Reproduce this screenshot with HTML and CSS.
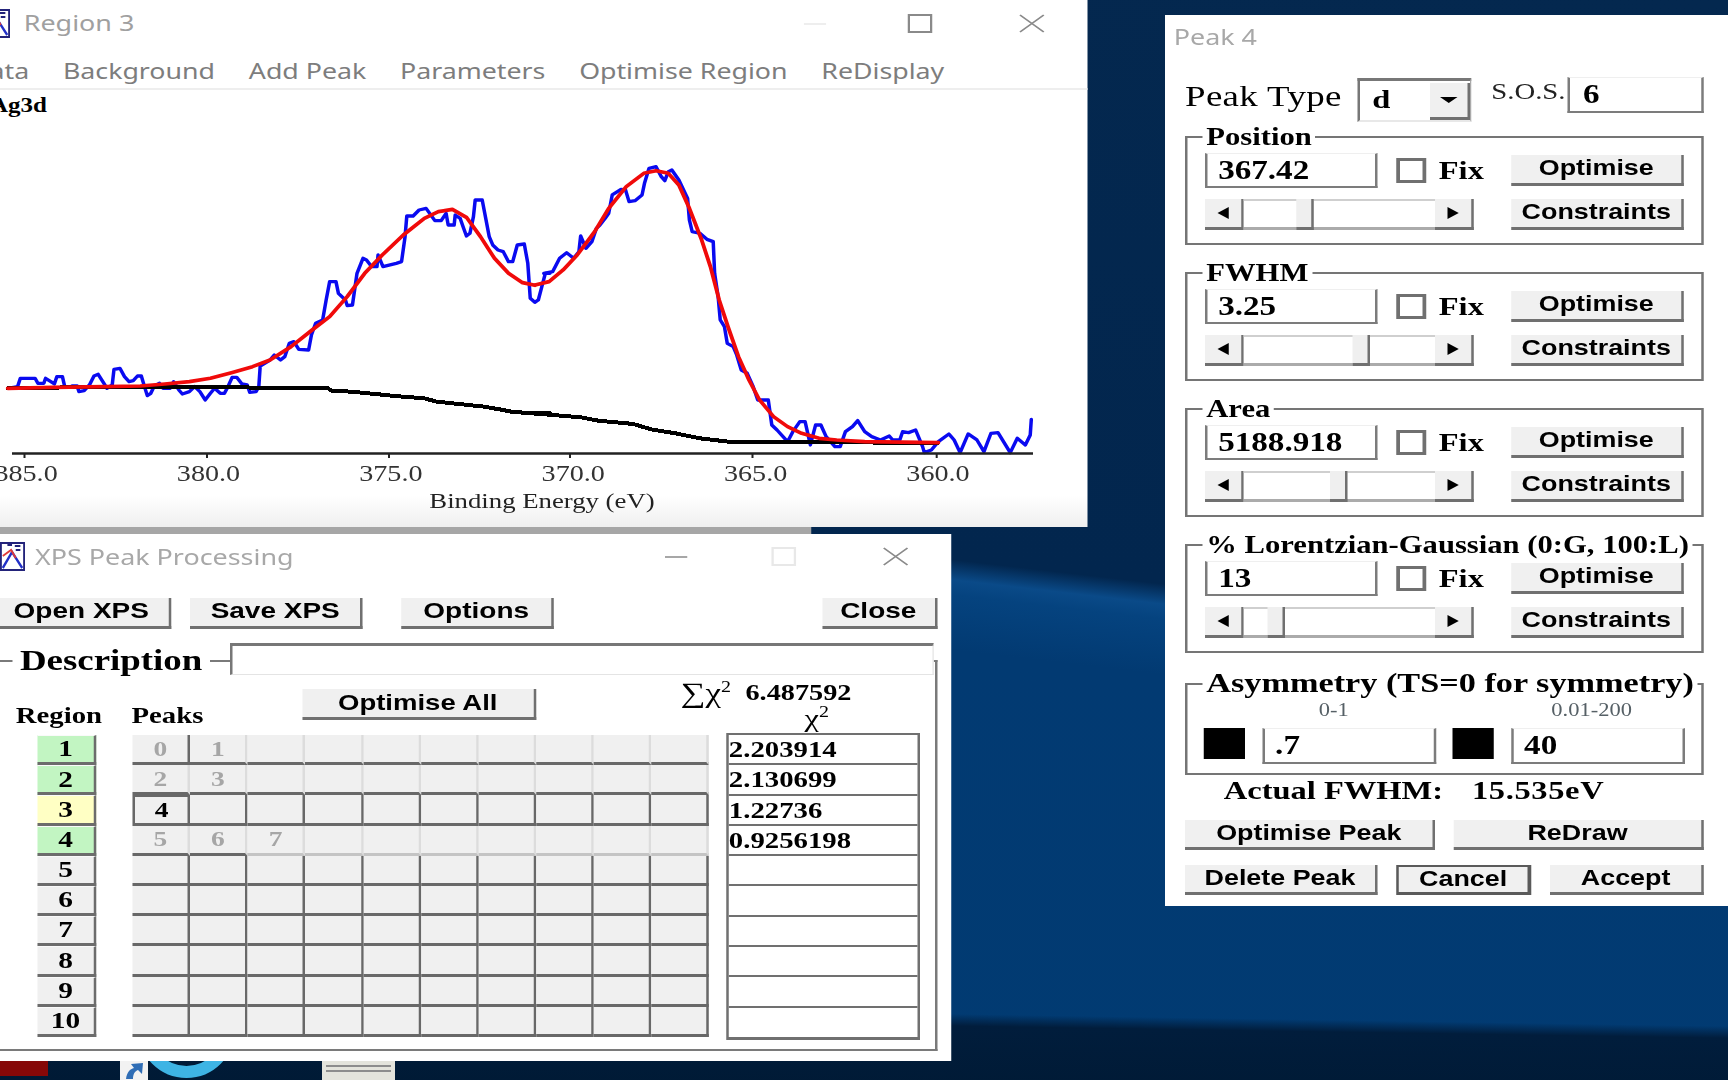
FILE: index.html
```html
<!DOCTYPE html>
<html lang="en">
<head>
<meta charset="utf-8">
<title>XPS Peak Processing</title>
<link rel="stylesheet" href="styles.css">
</head>
<body>
<main class="desktop">
  <div class="dk-red"></div>
  <div class="dk-tile">
    <svg class="dk-arrow" viewBox="0 0 28 18"><path d="M6 18 C7 11 10 8 14 7 L11 3 L23 2 L22 13 L18 9 C15 10 13 13 13 18 Z" fill="#2f6db5"/></svg>
  </div>
  <div class="dk-ring"></div>
  <div class="dk-note"><i></i><i></i></div>

  <section class="win region">
    <div class="region-body">
      <header class="title-bar region-title">
        <svg class="app-icon" viewBox="0 0 27 29" preserveAspectRatio="none"><rect x="1" y="1" width="25" height="27" fill="#fff" stroke="#23237a" stroke-width="2"/><path d="M3 26 L13 10 L24 26" fill="none" stroke="#2230c8" stroke-width="2.5"/><path d="M3 14 L12 8 L17 16" fill="none" stroke="#e03a3a" stroke-width="2"/><path d="M8 3 h5 M16 4 h6 M17 8 h5" stroke="#23237a" stroke-width="2"/></svg>
        <span class="title">Region 3</span>
        <div class="controls region-controls">
          <svg class="ctl ctl-min" viewBox="0 0 18 19"><path d="M0 10 H18" stroke="#eee" stroke-width="2"/></svg>
          <svg class="ctl ctl-max" viewBox="0 0 20 19"><rect x="1" y="1" width="18" height="17" fill="none" stroke="#8a8a8a" stroke-width="2"/></svg>
          <svg class="ctl ctl-close" viewBox="0 0 21 19"><path d="M1 1 L20 18 M20 1 L1 18" stroke="#8a8a8a" stroke-width="1.6"/></svg>
        </div>
      </header>
      <nav class="menu">
        <span>Data</span><span>Background</span><span>Add Peak</span><span>Parameters</span><span>Optimise Region</span><span>ReDisplay</span>
      </nav>
      <div class="chart-name">Ag3d</div>
      <svg class="plot" viewBox="-30 120 1117 340" preserveAspectRatio="none">
        <g fill="none" stroke-linejoin="round" stroke-linecap="round" stroke-width="10">
          <g transform="translate(0 130) scale(.3507 .3333)" stroke="#0a0af0">
            <polyline points="22,775 50,770 58,745 85,745 100,745 108,760 125,760 130,745 145,755 155,762 162,740 178,740 185,772 200,772 205,768 220,768 225,785 240,782 255,765 268,738 280,733 295,758 305,775 320,765 325,718 342,715 355,740 368,755 380,752 392,738 403,738 412,770 420,797 430,790 440,768 455,760 465,775 485,775 495,755 510,780 520,792 540,785 555,770 570,785 585,810 600,790 612,775 628,790 640,790 650,770 662,742 675,742 690,762 705,765 712,787 730,785 738,770 742,708 770,690 782,675 800,690 812,680 825,640 838,635 852,658 880,660 888,615 900,580 920,570 930,510 940,455 958,455 965,490 985,510 990,527 1005,525 1018,430 1035,385 1045,390 1060,410 1075,410 1078,375 1092,410 1130,400 1145,395 1155,320 1160,258 1178,258 1195,240 1215,235 1240,272 1258,272 1272,250 1278,285 1295,285 1298,255 1312,265 1322,295 1330,318 1340,310 1350,260 1355,210 1375,210 1395,320 1405,345 1420,360 1435,365 1450,395 1462,395 1475,345 1495,342 1505,400 1512,505 1525,517 1535,510 1545,470 1555,430 1568,430"/>
          </g>
          <g transform="translate(500 130) scale(.3507 .3333)" stroke="#0a0af0">
            <polyline points="125,430 150,425 170,385 190,368 210,385 225,365 230,318 245,355 262,335 275,295 285,285 300,265 310,250 320,195 345,178 358,180 368,215 385,212 405,195 412,160 425,115 445,110 460,140 470,152 480,125 490,120 510,150 535,205 540,270 548,305 570,310 590,328 608,335 612,430 622,500 628,570 640,590 648,640 665,650 675,675 688,720 705,730 722,770 735,810 765,810 775,885 790,900 820,935 835,905 855,875 870,875 885,945 900,885 915,885 930,920 955,950 970,950 985,905 1005,890 1020,872 1040,905 1060,920 1085,930 1110,918 1120,930 1140,930 1148,905 1165,908 1185,900 1205,950 1210,968 1230,960 1250,935 1280,912 1295,930 1312,968 1335,912 1360,930 1380,965 1400,910 1420,908 1455,968 1475,925 1498,945 1512,915 1515,868"/>
          </g>
          <g class="stepped" transform="translate(0 130) scale(.3507 .3333)" stroke="#000" stroke-width="12">
            <polyline points="22,775 330,770 770,773 935,775 945,782 1000,785 1070,792 1125,798 1210,805 1245,815 1290,820 1380,830 1460,845 1510,850 1568,850"/>
          </g>
          <g class="stepped" transform="translate(500 130) scale(.3507 .3333)" stroke="#000" stroke-width="12">
            <polyline points="0,838 30,845 90,850 150,855 230,862 280,872 380,882 430,898 500,910 570,925 650,935 760,937 1250,938"/>
          </g>
          <g transform="translate(0 130) scale(.3507 .3333)" stroke="#f00a0a" stroke-width="11">
            <polyline points="22,775 150,772 300,770 400,768 470,762 540,755 600,745 660,728 720,710 770,690 830,650 890,600 940,560 990,500 1040,430 1090,375 1150,315 1210,265 1250,245 1290,238 1330,262 1370,320 1410,385 1450,430 1490,458 1525,466"/>
          </g>
          <g transform="translate(500 130) scale(.3507 .3333)" stroke="#f00a0a" stroke-width="11">
            <polyline points="100,465 140,455 180,420 220,375 270,305 310,235 360,170 410,130 445,122 480,130 510,165 540,235 575,330 600,410 625,510 650,590 680,680 710,750 740,810 780,860 820,890 860,910 910,925 960,930 1040,935 1250,938"/>
          </g>
        </g>
        <path d="M12 453.5 H1033" stroke="#222" stroke-width="2.5"/>
        <path d="M24.5 453 V458 M207 453 V458 M389 453 V458 M570 453 V458 M752.5 453 V458 M936.7 453 V458" stroke="#222" stroke-width="2"/>
      </svg>
      <div class="ticks"><span>385.0</span><span>380.0</span><span>375.0</span><span>370.0</span><span>365.0</span><span>360.0</span></div>
      <div class="axis-name">Binding Energy (eV)</div>
    </div>
    <div class="region-strip"></div>
  </section>

  <section class="win xps">
    <header class="title-bar xps-title">
      <svg class="app-icon" viewBox="0 0 27 29" preserveAspectRatio="none"><rect x="1" y="1" width="25" height="27" fill="#fff" stroke="#23237a" stroke-width="2"/><path d="M3 26 L13 10 L24 26" fill="none" stroke="#2230c8" stroke-width="2.5"/><path d="M3 14 L12 8 L17 16" fill="none" stroke="#e03a3a" stroke-width="2"/><path d="M8 3 h5 M16 4 h6 M17 8 h5" stroke="#23237a" stroke-width="2"/></svg>
      <span class="title">XPS Peak Processing</span>
      <div class="controls xps-controls">
        <svg class="ctl ctl-min" viewBox="0 0 18 19"><path d="M0 10 H18" stroke="#8a8a8a" stroke-width="1.6"/></svg>
        <svg class="ctl ctl-max" viewBox="0 0 20 19"><rect x="1" y="1" width="18" height="17" fill="none" stroke="#e8e8e8" stroke-width="2"/></svg>
        <svg class="ctl ctl-close" viewBox="0 0 21 19"><path d="M1 1 L20 18 M20 1 L1 18" stroke="#8a8a8a" stroke-width="1.6"/></svg>
      </div>
    </header>
    <div class="file-row">
      <button class="btn w-open">Open XPS</button>
      <button class="btn w-save">Save XPS</button>
      <button class="btn w-opts">Options</button>
      <button class="btn w-close">Close</button>
    </div>
    <div class="desc-box">
      <span class="desc-legend">Description</span>
      <div class="desc-input"></div>
      <div class="table">
        <div class="head-region">Region</div>
        <div class="head-peaks"><span>Peaks</span><button class="btn w-all">Optimise All</button></div>
        <div class="head-chi">
          <div class="sum-line"><span class="sum-sym">∑χ<sup>2</sup></span><span class="sum-val">6.487592</span></div>
          <div class="chi-line">χ<sup>2</sup></div>
        </div>
        <div class="regions">
          <button class="rg rg-on">1</button><button class="rg rg-on">2</button><button class="rg rg-cur">3</button><button class="rg rg-on">4</button><button class="rg">5</button><button class="rg">6</button><button class="rg">7</button><button class="rg">8</button><button class="rg">9</button><button class="rg">10</button>
        </div>
        <div class="peaks">
          <button class="c g">0</button><button class="c s g">1</button><button class="c s"></button><button class="c s"></button><button class="c s"></button><button class="c s"></button><button class="c s"></button><button class="c s"></button><button class="c s"></button><button class="c s"></button>
          <button class="c s g">2</button><button class="c s g">3</button><button class="c s"></button><button class="c s"></button><button class="c s"></button><button class="c s"></button><button class="c s"></button><button class="c s"></button><button class="c s"></button><button class="c s"></button>
          <button class="c f">4</button><button class="c"></button><button class="c"></button><button class="c"></button><button class="c"></button><button class="c"></button><button class="c"></button><button class="c"></button><button class="c"></button><button class="c"></button>
          <button class="c s g">5</button><button class="c s g">6</button><button class="c t g">7</button><button class="c t"></button><button class="c t"></button><button class="c t"></button><button class="c t"></button><button class="c t"></button><button class="c t"></button><button class="c t"></button>
          <button class="c"></button><button class="c"></button><button class="c"></button><button class="c"></button><button class="c"></button><button class="c"></button><button class="c"></button><button class="c"></button><button class="c"></button><button class="c"></button>
          <button class="c"></button><button class="c"></button><button class="c"></button><button class="c"></button><button class="c"></button><button class="c"></button><button class="c"></button><button class="c"></button><button class="c"></button><button class="c"></button>
          <button class="c"></button><button class="c"></button><button class="c"></button><button class="c"></button><button class="c"></button><button class="c"></button><button class="c"></button><button class="c"></button><button class="c"></button><button class="c"></button>
          <button class="c"></button><button class="c"></button><button class="c"></button><button class="c"></button><button class="c"></button><button class="c"></button><button class="c"></button><button class="c"></button><button class="c"></button><button class="c"></button>
          <button class="c"></button><button class="c"></button><button class="c"></button><button class="c"></button><button class="c"></button><button class="c"></button><button class="c"></button><button class="c"></button><button class="c"></button><button class="c"></button>
          <button class="c"></button><button class="c"></button><button class="c"></button><button class="c"></button><button class="c"></button><button class="c"></button><button class="c"></button><button class="c"></button><button class="c"></button><button class="c"></button>
        </div>
        <div class="chi-list">
          <div>2.203914</div><div>2.130699</div><div>1.22736</div><div>0.9256198</div><div></div><div></div><div></div><div></div><div></div><div></div>
        </div>
      </div>
    </div>
  </section>

  <section class="win peak">
    <header class="title-bar peak-title"><span class="title">Peak 4</span></header>
    <div class="peak-body">
      <div class="top-row">
        <span class="type-label">Peak Type</span>
        <div class="combo"><span class="combo-val">d</span><span class="combo-btn"><i class="tri-down"></i></span></div>
        <span class="sos-label">S.O.S.</span>
        <div class="field sos-field">6</div>
      </div>

      <div class="group">
        <span class="legend">Position</span>
        <div class="group-row">
          <div class="field">367.42</div><span class="check"></span><span class="fix">Fix</span><button class="btn w-grp">Optimise</button>
        </div>
        <div class="group-row second">
          <div class="slider"><span class="sb-btn"><i class="tri-left"></i></span><div class="track"><span class="thumb" style="margin-left:42px"></span></div><span class="sb-btn"><i class="tri-right"></i></span></div>
          <button class="btn w-grp">Constraints</button>
        </div>
      </div>

      <div class="group">
        <span class="legend">FWHM</span>
        <div class="group-row">
          <div class="field">3.25</div><span class="check"></span><span class="fix">Fix</span><button class="btn w-grp">Optimise</button>
        </div>
        <div class="group-row second">
          <div class="slider"><span class="sb-btn"><i class="tri-left"></i></span><div class="track"><span class="thumb" style="margin-left:87px"></span></div><span class="sb-btn"><i class="tri-right"></i></span></div>
          <button class="btn w-grp">Constraints</button>
        </div>
      </div>

      <div class="group">
        <span class="legend">Area</span>
        <div class="group-row">
          <div class="field">5188.918</div><span class="check"></span><span class="fix">Fix</span><button class="btn w-grp">Optimise</button>
        </div>
        <div class="group-row second">
          <div class="slider"><span class="sb-btn"><i class="tri-left"></i></span><div class="track"><span class="thumb" style="margin-left:69px"></span></div><span class="sb-btn"><i class="tri-right"></i></span></div>
          <button class="btn w-grp">Constraints</button>
        </div>
      </div>

      <div class="group group-lor">
        <span class="legend">% Lorentzian-Gaussian (0:G, 100:L)</span>
        <div class="group-row">
          <div class="field">13</div><span class="check"></span><span class="fix">Fix</span><button class="btn w-grp">Optimise</button>
        </div>
        <div class="group-row second">
          <div class="slider"><span class="sb-btn"><i class="tri-left"></i></span><div class="track"><span class="thumb" style="margin-left:19px"></span></div><span class="sb-btn"><i class="tri-right"></i></span></div>
          <button class="btn w-grp">Constraints</button>
        </div>
      </div>

      <div class="group group-asym">
        <span class="legend legend-asym">Asymmetry (TS=0 for symmetry)</span>
        <div class="asym-grid">
          <span></span><span class="range range-a">0-1</span><span></span><span class="range range-b">0.01-200</span>
          <span class="swatch"></span><div class="field asym-field">.7</div><span class="swatch"></span><div class="field asym-field">40</div>
        </div>
      </div>

      <div class="actual"><span class="actual-label">Actual FWHM:</span><span class="actual-value">15.535eV</span></div>

      <div class="btn-row">
        <button class="btn w-half">Optimise Peak</button>
        <button class="btn w-half">ReDraw</button>
      </div>
      <div class="btn-row">
        <button class="btn w-del">Delete Peak</button>
        <button class="btn btn-default w-cancel">Cancel</button>
        <button class="btn w-accept">Accept</button>
      </div>
    </div>
  </section>
</main>
</body>
</html>
```
FILE: styles.css
```css
* { box-sizing: border-box; }
html, body { margin: 0; padding: 0; background: #012040; }
.desktop {
  position: relative;
  width: 1728px;
  height: 1080px;
  overflow: hidden;
  background:
    linear-gradient(180.9deg, rgba(1,28,58,0) 1026px, #011d3c 1038px, #001a35 100%),
    linear-gradient(186.6deg, #04284f 0, #02264e 645px, #0a4a88 665px, #05437f 680px, #023a72 735px, #013b72 100%);
}
.dk-red { position: absolute; left: 0; top: 1061px; width: 48px; height: 15px; background: #860808; }
.dk-tile { position: absolute; left: 120px; top: 1061px; width: 28px; height: 19px; background: #f2f2f2; }
.dk-arrow { display: block; width: 28px; height: 18px; }
.dk-ring { position: absolute; left: 138px; top: 981px; width: 97px; height: 97px; border-radius: 50%; border: 12px solid #3eb4e4; }
.dk-note { position: absolute; left: 322px; top: 1061px; width: 73px; height: 19px; background: #e4e4dc; padding: 4px 4px 0; }
.dk-note i { display: block; height: 2px; background: #8d8d8d; margin-bottom: 3px; }

.win { position: absolute; transform: scaleX(1.25); transform-origin: 0 0; filter: blur(.35px); }
.region { left: -30px; top: 0; width: 893.6px; height: 534px; }
.xps { left: -10px; top: 534px; width: 769px; height: 527px; background: #fff; }
.peak { left: 1165px; top: 15px; width: 452px; height: 891px; background: #fff; }

.title-bar { display: flex; align-items: center; }
.title { font: 21.5px/28px "Noto Sans", sans-serif; color: #a8a8a8; white-space: nowrap; }
.app-icon { width: 20px; height: 29px; flex: none; }
.controls { display: flex; align-items: center; margin-left: auto; }
.ctl { display: block; height: 19px; flex: none; }
.ctl-min { width: 18px; }
.ctl-max { width: 20px; }
.ctl-close { width: 21px; }

.region-body { height: 527px; background: linear-gradient(180deg, #fff 0, #fff 495px, #efefef 527px); }
.region-strip { width: 673px; height: 7px; background: #a6a6a6; }
.region-title { height: 46px; padding: 0 33.6px 0 12px; }
.region-title .title { margin-left: 11px; color: #a0a0a0; }
.region-controls .ctl-max { margin-left: 65px; }
.region-controls .ctl-close { margin-left: 69px; }
.menu {
  display: flex;
  gap: 27px;
  height: 44px;
  padding: 10px 0 0 0;
  border-bottom: 2px solid #eeeeee;
  font: 21.4px/30px "Noto Sans", sans-serif;
  color: #7d7d7d;
}
.chart-name { height: 30px; padding-left: 16px; font: bold 20px/30px "Liberation Serif", serif; color: #000; }
.plot { display: block; width: 893.6px; height: 340px; }
.stepped { shape-rendering: crispEdges; }
.ticks { display: flex; height: 28px; margin-left: -28.1px; font: 22.5px/28px "Liberation Serif", serif; color: #333; }
.ticks span { flex: none; width: 145.92px; text-align: center; }
.axis-name { height: 26px; padding-left: 21.6px; text-align: center; font: 21.4px/26px "Liberation Serif", serif; color: #222; }

.btn {
  margin: 0;
  padding: 0;
  background: #f0f0f0;
  border: 0;
  border-right: 2px solid #707070;
  border-bottom: 3px solid #707070;
  font: bold 21.5px/1 "Liberation Sans", sans-serif;
  color: #000;
  white-space: nowrap;
}
.btn-default { border: 2px solid #5a5a5a; border-right-width: 3px; border-bottom-width: 3px; }

.xps-title { height: 45px; padding: 0 34px 0 8px; }
.xps-title .title { margin-left: 8px; }
.xps-controls .ctl-max { margin-left: 67px; }
.xps-controls .ctl-close { margin-left: 69px; }
.file-row { display: flex; height: 49px; padding: 18.5px 11.4px 0 3.2px; }
.file-row .btn { height: 31px; font-size: 22.4px; }
.w-open { width: 141.6px; }
.w-save { width: 138.4px; margin-left: 15.2px; }
.w-opts { width: 122.4px; margin-left: 30.4px; }
.w-close { width: 92px; margin-left: auto; }

.desc-box {
  position: relative;
  width: 757.6px;
  height: 391px;
  margin-top: 32px;
  border: 2px solid #7a7a7a;
  border-left-width: 0;
  padding-left: 8px;
}
.desc-legend {
  position: absolute;
  left: 17.6px;
  top: -19px;
  padding: 0 6.4px;
  background: #fff;
  font: bold 29.5px/34px "Liberation Serif", serif;
  color: #000;
}
.desc-input {
  position: absolute;
  left: 192px;
  top: -19px;
  width: 563px;
  height: 32px;
  background: #fff;
  border: 1px solid #e4e4e4;
  border-top: 3px solid #777;
  border-left: 2px solid #777;
}
.table {
  display: grid;
  grid-template-columns: 93.6px 461px 155.4px;
  grid-template-rows: 71px 320px;
  column-gap: 0;
  padding-left: 12.6px;
}
.head-region { padding-top: 41px; font: bold 23px/26px "Liberation Serif", serif; }
.head-peaks { display: flex; align-items: flex-start; font: bold 23px/26px "Liberation Serif", serif; }
.head-peaks span { margin-top: 41px; margin-left: -1px; }
.w-all { width: 187px; height: 31px; margin: 27px 0 0 79px; font-size: 22px; }
.table > .chi-list, .head-chi { margin-left: 13.4px; }
.head-chi { padding-top: 18px; }
.sum-line { display: flex; align-items: center; height: 26px; margin-left: -36.2px; white-space: nowrap; }
.sum-sym { width: 52px; font: 28px/26px "Liberation Serif", serif; }
.sum-sym sup, .chi-line sup { font-size: 16px; line-height: 0; }
.sum-val { font: bold 22.6px/26px "Liberation Serif", serif; }
.chi-line { margin-left: 63px; font: 26px/26px "Liberation Serif", serif; }

.regions { display: grid; grid-auto-rows: 30.2px; width: 46.4px; margin: 2px 0 0 17.6px; align-content: start; }
.rg {
  margin: 0;
  padding: 0;
  background: #f0f0f0;
  border: 0;
  border-top: 1px solid #fafafa;
  border-right: 2px solid #6c6c6c;
  border-bottom: 3px solid #6c6c6c;
  font: bold 23.5px/1 "Liberation Serif", serif;
  color: #000;
}
.rg-on { background: #c2f5c2; }
.rg-cur { background: #ffffc4; }
.peaks { display: grid; grid-template-columns: repeat(10, 46.1px); grid-auto-rows: 30.2px; margin-top: 2px; align-content: start; }
.c {
  margin: 0;
  padding: 0;
  background: #f0f0f0;
  border: 0;
  border-right: 2.4px solid #686868;
  border-bottom: 3px solid #686868;
  font: bold 22px/1 "Liberation Serif", serif;
  color: #000;
}
.c.s { border-right-color: #dcdcdc; }
.c.t { border-right-color: #dcdcdc; border-bottom-color: #c4c4c4; }
.c.g { color: #a6a6a6; }
.c.f { border: 2px solid #686868; border-bottom-width: 3px; }
.chi-list { display: grid; grid-auto-rows: 30.3px; width: 155.4px; height: 307px; border: 2px solid #707070; border-bottom-width: 3px; background: #fff; }
.chi-list div { padding-left: .5px; font: bold 23px/30px "Liberation Serif", serif; color: #000; border-bottom: 2px solid #707070; }
.chi-list div:last-child { border-bottom: 0; }

.peak-title { height: 44px; padding-left: 7px; }
.peak-body { padding: 18px 0 0 16px; }
.top-row { display: flex; align-items: flex-start; width: 415px; height: 45px; margin-bottom: 14px; }
.type-label { width: 138.4px; margin-top: 3px; font: 29.5px/32px "Liberation Serif", serif; color: #000; letter-spacing: .3px; white-space: nowrap; }
.combo {
  display: flex;
  justify-content: space-between;
  width: 90.4px;
  height: 44px;
  margin-top: 1px;
  padding-left: 9.5px;
  border-top: 3px solid #777;
  border-left: 2px solid #777;
  border-right: 1px solid #aaa;
  border-bottom: 2px solid #e8e8e8;
  font: bold 26px/38px "Liberation Serif", serif;
}
.combo-btn { display: flex; align-items: center; justify-content: center; width: 32px; height: 37px; margin-top: 2px; background: #f0f0f0; border-right: 2px solid #707070; border-bottom: 3px solid #707070; }
.tri-down { width: 0; height: 0; border-left: 7px solid transparent; border-right: 7px solid transparent; border-top: 6px solid #000; }
.tri-left { width: 0; height: 0; border-top: 6.5px solid transparent; border-bottom: 6.5px solid transparent; border-right: 9px solid #000; }
.tri-right { width: 0; height: 0; border-top: 6.5px solid transparent; border-bottom: 6.5px solid transparent; border-left: 9px solid #000; }
.sos-label { width: 61.4px; margin-left: 16.2px; font: 23px/30px "Liberation Serif", serif; color: #222; white-space: nowrap; }
.field {
  flex: none;
  width: 138px;
  height: 35px;
  padding-left: 8.5px;
  background: #fff;
  border: 2px solid #7c7c7c;
  border-top: 1px solid #efefef;
  border-bottom-width: 2px;
  font: bold 26.5px/33px "Liberation Serif", serif;
  color: #000;
}
.sos-field { width: 108.6px; height: 36px; padding-left: 10px; }

.group { position: relative; width: 415px; height: 109px; margin-bottom: 27px; padding: 15px 14px 0; border: 2px solid #757575; }
.group-lor { margin-bottom: 30px; }
.group-asym { height: 92px; margin-bottom: 2px; padding: 16px 14px 0 13px; }
.legend {
  position: absolute;
  left: 12px;
  top: -14px;
  padding: 0 3px;
  background: #fff;
  font: bold 24.5px/26px "Liberation Serif", serif;
  color: #000;
  white-space: nowrap;
}
.legend-asym { font-size: 27.4px; top: -15px; }
.group-row { display: flex; align-items: center; height: 35px; }
.group-row.second { height: 31px; margin-top: 11px; justify-content: space-between; }
.check { flex: none; width: 24px; height: 25px; margin-left: 15px; border: 3px solid #707070; background: #fff; }
.fix { flex: none; margin-left: 10px; font: bold 26px/30px "Liberation Serif", serif; color: #000; }
.w-grp { flex: none; width: 138px; height: 31px; }
.group-row:not(.second) .w-grp { margin-left: auto; }
.slider { display: flex; flex: none; width: 215px; height: 31px; }
.sb-btn { display: flex; align-items: center; justify-content: center; flex: none; width: 31px; background: #f0f0f0; border-right: 2px solid #707070; border-bottom: 3px solid #707070; }
.track { display: flex; flex: 1; background: #fff; border-top: 2px solid #cfcfcf; border-bottom: 3px solid #ababab; }
.thumb { display: block; width: 14px; background: #efefef; border-right: 2px solid #707070; border-bottom: 3px solid #707070; margin-bottom: -3px; margin-top: -2px; }

.asym-grid { display: grid; grid-template-columns: 33px 139px 33px 139px; grid-template-rows: 18px auto; column-gap: 13.6px; row-gap: 9px; }
.range { font: 18px/18px "Liberation Serif", serif; color: #566066; text-align: center; }
.range-a { padding-right: 24px; }
.range-b { padding-right: 10px; }
.swatch { display: block; height: 31px; background: #000; }
.asym-field { width: 139px; height: 36px; }

.actual { display: flex; width: 415px; height: 28px; margin-bottom: 15px; padding-left: 31px; font: bold 26px/28px "Liberation Serif", serif; color: #000; white-space: nowrap; }
.actual-label { width: 198.6px; }
.actual-value { letter-spacing: .5px; }
.btn-row { display: flex; justify-content: space-between; width: 415px; height: 30px; margin-bottom: 15px; }
.w-half { width: 200px; }
.w-del { width: 154px; }
.w-cancel { width: 108px; }
.w-accept { width: 123px; }
```
